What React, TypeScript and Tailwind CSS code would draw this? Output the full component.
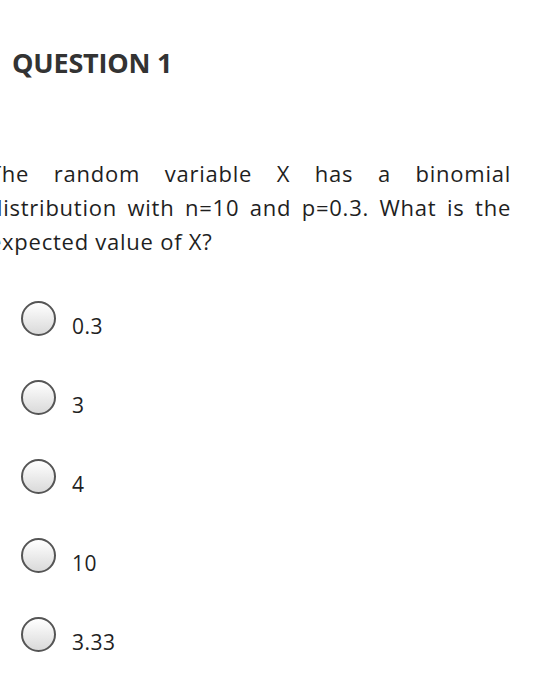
import React from "react";

const options = ["0.3", "3", "4", "10", "3.33"];

function Radio() {
  return (
    <span className="block w-[35px] h-[35px] rounded-full border-2 border-[#555555] bg-gradient-to-b from-[#ffffff] to-[#dadada] shrink-0" />
  );
}

export default function App() {
  return (
    <div
      className="w-[536px] h-[700px] bg-white overflow-hidden text-[#1f1f1f]"
      style={{ fontFamily: '"Open Sans", sans-serif' }}
    >
      <div className="pt-[44px] pl-[12px]">
        <h1 className="text-[27px] leading-[38px] font-bold tracking-[-0.2px] text-[#333333]">QUESTION 1</h1>
      </div>
      <p className="mt-[74px] ml-[-11px] w-[522px] text-[22px] leading-[34px] tracking-[0.75px] text-justify">
        The random variable X has a binomial distribution with n=10 and p=0.3. What is the expected value of X?
      </p>
      <div className="mt-[43px] flex flex-col gap-[44px] pl-[21px]">
        {options.map((o) => (
          <div key={o} className="flex items-center h-[35px]">
            <Radio />
            <span className="ml-[16px] text-[21px] leading-[34px] tracking-[0.5px] mt-[14px]">{o}</span>
          </div>
        ))}
      </div>
    </div>
  );
}
